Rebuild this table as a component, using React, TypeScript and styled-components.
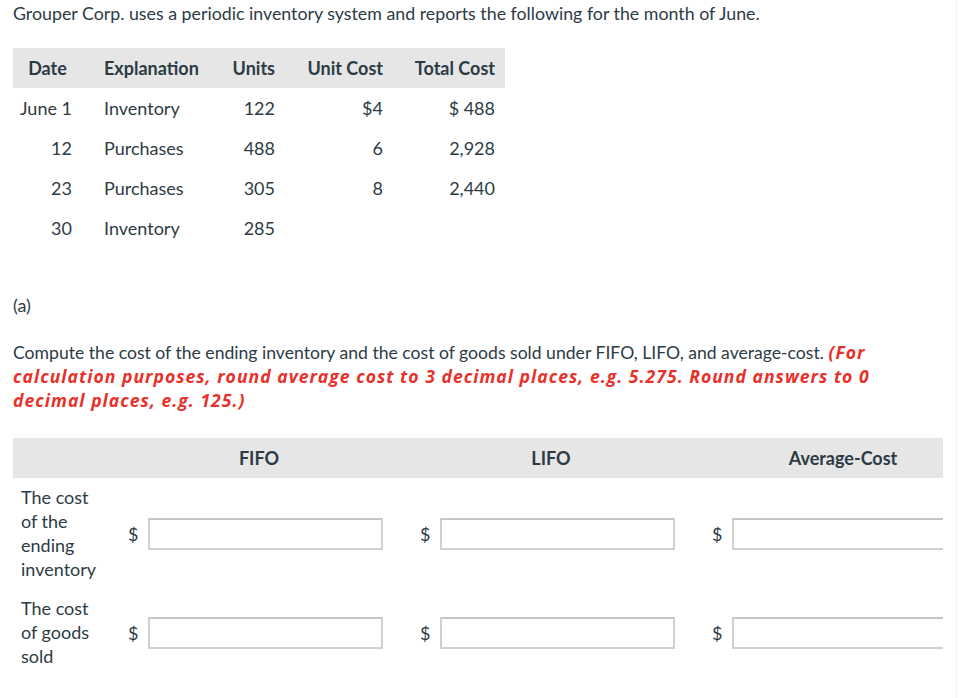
import styled, { createGlobalStyle } from "styled-components";

const GlobalStyle = createGlobalStyle`
  html, body {
    margin: 0;
    padding: 0;
    background: #fff;
  }
  body {
    font-family: Lato, "Open Sans", "Liberation Sans", sans-serif;
    color: #2d3b45;
    font-size: 18px;
    line-height: 24px;
  }
`;

//styles
const Page = styled.div`
  width: 957px;
  min-height: 698px;
  box-sizing: border-box;
  padding: 1px 0 0 13px;
  border-right: 1px solid #f2f2f2;
`;

const Intro = styled.p`
  margin: 0 0 23px 0;
  font-size: 17.8px;
`;

const DataTable = styled.div`
  display: grid;
  grid-template-columns: 69px 131px 72px 108px 112px;
  width: 492px;
`;

const HeadCell = styled.div<{ $align?: string; $pl?: number; $pr?: number }>`
  background: #e6e6e6;
  height: 40px;
  display: flex;
  align-items: center;
  justify-content: ${(p) => p.$align || "flex-end"};
  padding-left: ${(p) => p.$pl ?? 0}px;
  padding-right: ${(p) => p.$pr ?? 10}px;
  font-weight: 700;
  white-space: nowrap;
`;

const Cell = styled.div<{ $align?: string; $pl?: number; $pr?: number }>`
  height: 40px;
  display: flex;
  align-items: center;
  justify-content: ${(p) => p.$align || "flex-end"};
  padding-left: ${(p) => p.$pl ?? 0}px;
  padding-right: ${(p) => p.$pr ?? 10}px;
  white-space: nowrap;
`;

const PartLabel = styled.p`
  margin: 45px 0 24px 0;
`;

const Instructions = styled.p`
  margin: 0 0 25px 0;
  max-width: 900px;
  font-size: 17.6px;
  line-height: 24px;
`;

const Hint = styled.span`
  color: #e8312a;
  font-family: "Open Sans", "Liberation Sans", sans-serif;
  font-size: 17.6px;
  line-height: 20px;
  font-weight: 700;
  font-style: italic;
  letter-spacing: 1px;
`;

const AnswerWrap = styled.div`
  width: 930px;
  overflow: hidden;
`;

const AnswerGrid = styled.div`
  display: grid;
  grid-template-columns: 100px repeat(3, 292px);
  width: 976px;
`;

const AnswerHead = styled.div`
  background: #e6e6e6;
  height: 40px;
  display: flex;
  align-items: center;
  justify-content: center;
  font-weight: 700;
`;

const RowLabel = styled.div`
  padding: 7px 8px 8px 8px;
`;

const AnswerCell = styled.div`
  display: flex;
  align-items: center;
  padding: 0 22px 0 15px;
`;

const Dollar = styled.span`
  width: 11px;
  margin-right: 9px;
`;

const AmountInput = styled.input`
  width: 235px;
  height: 32px;
  box-sizing: border-box;
  border: 2px solid #d0d0d0;
  border-top-color: #c6c6c6;
  border-radius: 1px;
  background: #fff;
  font: inherit;
  padding: 0 6px;
  outline: none;
`;

const rows = [
  { date: "June 1", what: "Inventory", units: "122", unit: "$4", total: "$ 488" },
  { date: "12", what: "Purchases", units: "488", unit: "6", total: "2,928" },
  { date: "23", what: "Purchases", units: "305", unit: "8", total: "2,440" },
  { date: "30", what: "Inventory", units: "285", unit: "", total: "" },
];

const methods = ["FIFO", "LIFO", "Average-Cost"];

const answerRows = [
  "The cost of the ending inventory",
  "The cost of goods sold",
];

export default function App() {
  return (
    <Page>
      <GlobalStyle />
      <Intro>
        Grouper Corp. uses a periodic inventory system and reports the following
        for the month of June.
      </Intro>

      <DataTable>
        <HeadCell $align="center" $pr={0}>Date</HeadCell>
        <HeadCell $align="flex-start" $pl={22}>Explanation</HeadCell>
        <HeadCell>Units</HeadCell>
        <HeadCell>Unit Cost</HeadCell>
        <HeadCell>Total Cost</HeadCell>
        {rows.map((r) => (
          <>
            <Cell key={r.date + "d"}>{r.date}</Cell>
            <Cell key={r.date + "e"} $align="flex-start" $pl={22}>
              {r.what}
            </Cell>
            <Cell key={r.date + "u"}>{r.units}</Cell>
            <Cell key={r.date + "c"}>{r.unit}</Cell>
            <Cell key={r.date + "t"}>{r.total}</Cell>
          </>
        ))}
      </DataTable>

      <PartLabel>(a)</PartLabel>
      <Instructions>
        Compute the cost of the ending inventory and the cost of goods sold under
        FIFO, LIFO, and average-cost.{" "}
        <Hint>
          (For calculation purposes, round average cost to 3 decimal places, e.g.
          5.275. Round answers to 0 decimal places, e.g. 125.)
        </Hint>
      </Instructions>

      <AnswerWrap>
        <AnswerGrid>
          <AnswerHead />
          {methods.map((m) => (
            <AnswerHead key={m}>{m}</AnswerHead>
          ))}
          {answerRows.map((label, i) => (
            <>
              <RowLabel key={"l" + i}>{label}</RowLabel>
              {methods.map((m) => (
                <AnswerCell key={m + i}>
                  <Dollar>$</Dollar>
                  <AmountInput type="text" aria-label={m} />
                </AnswerCell>
              ))}
            </>
          ))}
        </AnswerGrid>
      </AnswerWrap>
    </Page>
  );
}
